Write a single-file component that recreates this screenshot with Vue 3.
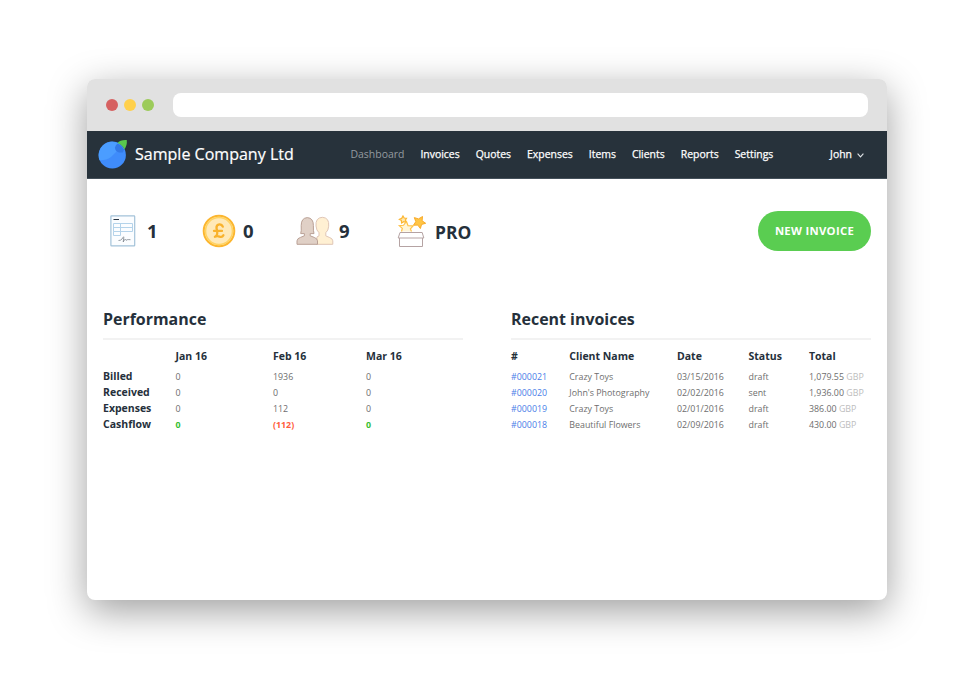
<script setup>
import { ref } from 'vue';

const company = ref('Sample Company Ltd');
const active = ref('Dashboard');
const links = ['Dashboard', 'Invoices', 'Quotes', 'Expenses', 'Items', 'Clients', 'Reports', 'Settings'];

const months = ['Jan 16', 'Feb 16', 'Mar 16'];
const performance = ref([
  { label: 'Billed', values: [0, 1936, 0] },
  { label: 'Received', values: [0, 0, 0] },
  { label: 'Expenses', values: [0, 112, 0] },
]);
const cashflow = ref([0, -112, 0]);

const invoices = ref([
  { id: '#000021', client: 'Crazy Toys', date: '03/15/2016', status: 'draft', total: '1,079.55' },
  { id: '#000020', client: "John's Photography", date: '02/02/2016', status: 'sent', total: '1,936.00' },
  { id: '#000019', client: 'Crazy Toys', date: '02/01/2016', status: 'draft', total: '386.00' },
  { id: '#000018', client: 'Beautiful Flowers', date: '02/09/2016', status: 'draft', total: '430.00' },
]);

const money = (value) => (value < 0 ? `(${Math.abs(value)})` : value);
</script>

<template>
  <div class="stage">
    <div class="window">
      <div class="chrome">
        <span class="dot red"></span>
        <span class="dot yellow"></span>
        <span class="dot green"></span>
        <div class="address"></div>
      </div>

      <header class="navbar">
        <svg class="logo" width="30" height="30" viewBox="0 0 30 30">
          <circle cx="14.3" cy="16" r="13.6" fill="#3f8cfb" />
          <path d="M1.5 21.2A13.6 13.6 0 0 1 21 4.500L19 12L13 18Q8 21.500 1.5 21.2z" fill="#4b9dff" />
          <path d="M17 8.500Q17.500 5.500 20 4.500Q23.500 6.500 26 10.500L25 13.500H21Q17 12.500 17 8.500z" fill="#3379e6" />
          <path d="M19.500 4Q22 .6 28.800 1Q29.400 7 26 10.500Q25.500 6.500 19.500 4z" fill="#59c94e" />
        </svg>
        <span class="brand">{{ company }}</span>
        <nav class="links">
          <a v-for="link in links"
             :key="link"
             :class="{active: link === active}"
             @click="active = link">{{ link }}</a>
        </nav>
        <a class="user">John
          <svg width="7" height="5" viewBox="0 0 7 5">
            <path d="M.6 .7L3.500 3.900L6.400 .7" fill="none" stroke="#dfe3e6" stroke-width="1.1" />
          </svg>
        </a>
      </header>

      <main>
        <section class="stats">
          <div class="stat s1">
            <svg width="26" height="32" viewBox="0 0 26 32">
              <rect x=".9" y=".9" width="23.800" height="30" rx=".6" fill="#fbfdff" stroke="#a3c2d9" stroke-width="1.2" />
              <path d="M3.500 4.500h5.500" stroke="#273442" stroke-width="1.1" />
              <path d="M3.500 8.500h19v8h-19zM3.500 12.500h19M10.500 8.500v12h-7v-4" fill="none" stroke="#b4d3ea" />
              <path d="M8.500 25.500q2 .2 3.500-1.500q2-3.500 1.800-1.500l-.6 4.500q2-4 2.300-2.500t1.700.2q1.500-.2 3.300 0" fill="none" stroke="#7c848b" stroke-width=".8" />
            </svg>
            <strong>1</strong>
          </div>
          <div class="stat s2">
            <svg width="34" height="34" viewBox="0 0 34 34">
              <circle cx="17" cy="17" r="15.300" fill="#ffe9b8" stroke="#fcb62f" stroke-width="2" />
              <circle cx="17" cy="17" r="13.500" fill="none" stroke="#ffd363" stroke-width="1.600" />
              <path d="M20.800 12.600Q19.800 10.300 17.400 10.400Q14.200 10.700 14.500 14.200Q15.800 18 15.200 20Q14.600 22 12.900 22.700Q15.500 21.700 17.500 22.600Q20.300 23.600 21.400 21.200M12 16.900h8" fill="none" stroke="#f9b22c" stroke-width="2.300" stroke-linecap="round" stroke-linejoin="round" />
            </svg>
            <strong>0</strong>
          </div>
          <div class="stat s3">
            <svg width="38" height="30" viewBox="0 0 38 30">
              <path d="M20.500 28.300h16.300v-3.500q-.3-2.300-3-3.200l-4-1.700v-3.200q2.600-2 2.900-6.500Q33.500 1.700 26.300 1.300Q19.300 1.700 20 10q.4 4.600 3 6.700v3.200l-2 1z" fill="#fff0d3" stroke="#dfc5b5" />
              <path d="M1 28.300v-3.500q.3-2.500 3.500-3.400l3.900-1.600v-2.200H4.700Q5.600 15 5.200 9.500Q5.200 2 11.300 1.600Q17.400 2 17.400 9.500Q17.200 15 18 17.600h-3.800v2.200l4 1.600q3 1 3.300 3.400v3.500z" fill="#e0d0c6" stroke="#b9a095" />
            </svg>
            <strong>9</strong>
          </div>
          <div class="stat s4">
            <svg width="30" height="34" viewBox="0 0 30 34">
              <path d="M6 2l1.200 2 2.300.2-1.200 1.900.6 2.300-2.300-.7L4.600 9l-.2-2.400-2-1.300 2.300-.9z" fill="#ffe8ac" stroke="#fcb632" stroke-width="1.200" />
              <path d="M25.500 2.500l-.4 4.300 3.600 2.500-4.100 1.100-1.200 4.100-2.600-3.400-4.300.1 2.300-3.600-1.500-4 4.200 1.300z" fill="#ffc545" stroke="#f9ab2b" />
              <path d="M4.500 17.500L5.300 14.400 2.300 11.700l4.200-.4L9.500 7.500l1.500 4.200 5.200.2-2.800 3 1.100 2.600" fill="#fff5d7" stroke="#ffc247" stroke-width="1.200" />
              <path d="M2.500 23.500h23v9h-23z" fill="#fff" stroke="#b5a3a3" />
              <path d="M3 18.500h22.200l1.600 5.500H1.200z" fill="#fff" stroke="#b5a3a3" />
            </svg>
            <strong>PRO</strong>
          </div>
          <button type="button" class="btn">NEW INVOICE</button>
        </section>

        <div class="panels">
          <section class="panel">
            <h2>Performance</h2>
            <div class="table perf">
              <b></b>
              <b v-for="month in months" :key="month">{{ month }}</b>
            </div>
            <div class="table perf" v-for="row in performance" :key="row.label">
              <b>{{ row.label }}</b>
              <span v-for="(value, idx) in row.values" :key="idx">{{ value }}</span>
            </div>
            <div class="table perf cashflow">
              <b>Cashflow</b>
              <span v-for="(value, idx) in cashflow"
                    :key="idx"
                    :class="value < 0 ? 'minus' : 'plus'">{{ money(value) }}</span>
            </div>
          </section>

          <section class="panel">
            <h2>Recent invoices</h2>
            <div class="table recent">
              <b>#</b><b>Client Name</b><b>Date</b><b>Status</b><b>Total</b>
            </div>
            <div class="table recent" v-for="invoice in invoices" :key="invoice.id">
              <a>{{ invoice.id }}</a>
              <span>{{ invoice.client }}</span>
              <span>{{ invoice.date }}</span>
              <span>{{ invoice.status }}</span>
              <span>{{ invoice.total }} <i>GBP</i></span>
            </div>
          </section>
        </div>
      </main>
    </div>
  </div>
</template>

<style>
  body {
    background-color: #fff;
  }
</style>

<style scoped>
  .stage {
    box-sizing: border-box;
    height: 700px;
    padding: 79px 88px 0 87px;
    overflow: hidden;
    font-family: "Open Sans", "Noto Sans", sans-serif;
    color: #25303b;
  }

  .window {
    height: 521px;
    border-radius: 8px;
    overflow: hidden;
    background-color: #fff;
    box-shadow: 0 11px 38px rgba(0, 0, 0, 0.38);
  }

  .chrome {
    box-sizing: border-box;
    height: 52px;
    padding: 0 19px;
    display: flex;
    align-items: center;
    gap: 6px;
    background-color: #e1e1e1;
  }

  .dot {
    width: 12px;
    height: 12px;
    border-radius: 50%;
  }

  .red { background-color: #d66161; }
  .yellow { background-color: #ffd04b; }
  .green { background-color: #9ccb5a; }

  .address {
    flex: 1;
    height: 24px;
    margin-left: 13px;
    border-radius: 8px;
    background-color: #fff;
  }

  .navbar {
    box-sizing: border-box;
    height: 48px;
    padding: 0 23px 2px 11px;
    display: flex;
    align-items: center;
    background-color: #27323b;
    border-bottom: 1px solid #44505a;
    color: #fff;
    font-size: 10.45px;
  }

  .brand {
    width: 215.5px;
    margin-left: 7px;
    font-size: 16.05px;
    -webkit-text-stroke: 0.2px;
    white-space: nowrap;
  }

  .links {
    display: flex;
    gap: 16px;
    -webkit-text-stroke: 0.25px;
  }

  .links a {
    cursor: pointer;
  }

  .links .active {
    color: #949a9f;
    -webkit-text-stroke: 0;
  }

  .user {
    margin-left: auto;
    display: flex;
    align-items: center;
    gap: 5px;
    -webkit-text-stroke: 0.25px;
  }

  .user svg {
    margin-top: 3px;
  }

  main {
    padding: 32px 16px 0;
  }

  .stats {
    display: flex;
    align-items: center;
    height: 40px;
    padding-left: 7px;
  }

  .stat {
    display: flex;
    align-items: center;
  }

  .stat strong {
    font-size: 18.5px;
    font-weight: 700;
    line-height: 24px;
  }

  .s1 { width: 92px; gap: 11px; }
  .s2 { width: 94px; gap: 7px; }
  .s3 { width: 101px; gap: 5px; }
  .s4 { gap: 8px; }

  .s4 strong {
    margin-top: 2px;
    font-size: 17.4px;
  }

  .btn {
    width: 113px;
    height: 40px;
    margin-left: auto;
    padding: 0 0 1px;
    border: none;
    border-radius: 20px;
    background-color: #5acd51;
    color: #fff;
    font-family: inherit;
    font-size: 11.3px;
    font-weight: 700;
    letter-spacing: 0.3px;
    cursor: pointer;
  }

  .panels {
    display: grid;
    grid-template-columns: 360px 360px;
    gap: 48px;
    margin-top: 56px;
  }

  h2 {
    height: 31px;
    margin: 0 0 8px;
    border-bottom: 2px solid #f2f2f2;
    font-size: 15.95px;
    font-weight: 700;
    line-height: 24px;
  }

  .table {
    display: grid;
    height: 16px;
    line-height: 18px;
    font-size: 8.85px;
    color: #6e6e6e;
    white-space: nowrap;
  }

  h2 + .table {
    margin-bottom: 4px;
  }

  .table b {
    font-size: 10.5px;
    font-weight: 700;
    line-height: 17px;
    color: #25303b;
  }

  .perf {
    grid-template-columns: 72.5px 97.5px 93px 1fr;
  }

  .recent {
    grid-template-columns: 58.3px 107.7px 71.5px 60.5px 1fr;
  }

  .recent a {
    color: #4a80e8;
  }

  .recent i {
    font-style: normal;
    color: #bdbdbd;
  }

  .cashflow span {
    font-weight: 700;
  }

  .cashflow .plus {
    color: #37c032;
  }

  .cashflow .minus {
    color: #ff5d3c;
  }
</style>
